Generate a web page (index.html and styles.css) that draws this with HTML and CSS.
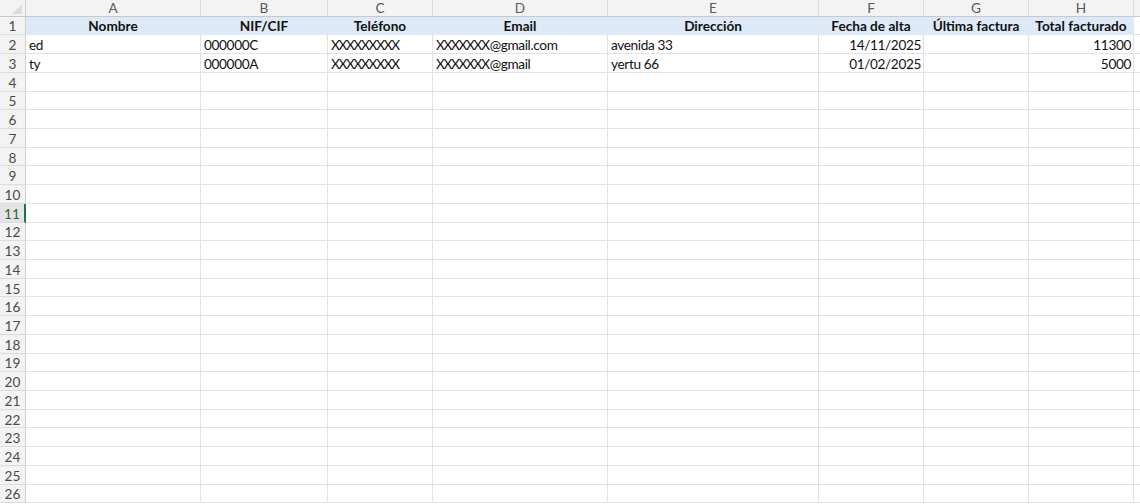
FILE: index.html
```html
<!DOCTYPE html>
<html lang="es">
<head>
<meta charset="utf-8">
<title>Clientes</title>
<link rel="stylesheet" href="styles.css">
</head>
<body>
<div class="sheet">
  <div class="r hdr">
    <i class="n corner"><span class="tri"></span></i><i>A</i><i>B</i><i>C</i><i>D</i><i>E</i><i>F</i><i>G</i><i>H</i><i class="rest"></i>
  </div>
  <div class="r head">
    <i class="n">1</i><i>Nombre</i><i>NIF/CIF</i><i>Teléfono</i><i>Email</i><i>Dirección</i><i>Fecha de alta</i><i>Última factura</i><i>Total facturado</i><i class="rest"></i>
  </div>
  <div class="r data">
    <i class="n">2</i><i>ed</i><i>000000C</i><i><span class="xx">XXXXXXXXX</span></i><i><span class="xx">XXXXXXX</span>@gmail.com</i><i>avenida 33</i><i class="num">14/11/2025</i><i></i><i class="num">11300</i><i class="rest"></i>
  </div>
  <div class="r data">
    <i class="n">3</i><i>ty</i><i>000000A</i><i><span class="xx">XXXXXXXXX</span></i><i><span class="xx">XXXXXXX</span>@gmail</i><i>yertu 66</i><i class="num">01/02/2025</i><i></i><i class="num">5000</i><i class="rest"></i>
  </div>
  <div class="r"><i class="n">4</i><i></i><i></i><i></i><i></i><i></i><i></i><i></i><i></i><i class="rest"></i></div>
  <div class="r"><i class="n">5</i><i></i><i></i><i></i><i></i><i></i><i></i><i></i><i></i><i class="rest"></i></div>
  <div class="r"><i class="n">6</i><i></i><i></i><i></i><i></i><i></i><i></i><i></i><i></i><i class="rest"></i></div>
  <div class="r"><i class="n">7</i><i></i><i></i><i></i><i></i><i></i><i></i><i></i><i></i><i class="rest"></i></div>
  <div class="r"><i class="n">8</i><i></i><i></i><i></i><i></i><i></i><i></i><i></i><i></i><i class="rest"></i></div>
  <div class="r"><i class="n">9</i><i></i><i></i><i></i><i></i><i></i><i></i><i></i><i></i><i class="rest"></i></div>
  <div class="r"><i class="n">10</i><i></i><i></i><i></i><i></i><i></i><i></i><i></i><i></i><i class="rest"></i></div>
  <div class="r sel"><i class="n">11</i><i></i><i></i><i></i><i></i><i></i><i></i><i></i><i></i><i class="rest"></i></div>
  <div class="r"><i class="n">12</i><i></i><i></i><i></i><i></i><i></i><i></i><i></i><i></i><i class="rest"></i></div>
  <div class="r"><i class="n">13</i><i></i><i></i><i></i><i></i><i></i><i></i><i></i><i></i><i class="rest"></i></div>
  <div class="r"><i class="n">14</i><i></i><i></i><i></i><i></i><i></i><i></i><i></i><i></i><i class="rest"></i></div>
  <div class="r"><i class="n">15</i><i></i><i></i><i></i><i></i><i></i><i></i><i></i><i></i><i class="rest"></i></div>
  <div class="r"><i class="n">16</i><i></i><i></i><i></i><i></i><i></i><i></i><i></i><i></i><i class="rest"></i></div>
  <div class="r"><i class="n">17</i><i></i><i></i><i></i><i></i><i></i><i></i><i></i><i></i><i class="rest"></i></div>
  <div class="r"><i class="n">18</i><i></i><i></i><i></i><i></i><i></i><i></i><i></i><i></i><i class="rest"></i></div>
  <div class="r"><i class="n">19</i><i></i><i></i><i></i><i></i><i></i><i></i><i></i><i></i><i class="rest"></i></div>
  <div class="r"><i class="n">20</i><i></i><i></i><i></i><i></i><i></i><i></i><i></i><i></i><i class="rest"></i></div>
  <div class="r"><i class="n">21</i><i></i><i></i><i></i><i></i><i></i><i></i><i></i><i></i><i class="rest"></i></div>
  <div class="r"><i class="n">22</i><i></i><i></i><i></i><i></i><i></i><i></i><i></i><i></i><i class="rest"></i></div>
  <div class="r"><i class="n">23</i><i></i><i></i><i></i><i></i><i></i><i></i><i></i><i></i><i class="rest"></i></div>
  <div class="r"><i class="n">24</i><i></i><i></i><i></i><i></i><i></i><i></i><i></i><i></i><i class="rest"></i></div>
  <div class="r"><i class="n">25</i><i></i><i></i><i></i><i></i><i></i><i></i><i></i><i></i><i class="rest"></i></div>
  <div class="r"><i class="n">26</i><i></i><i></i><i></i><i></i><i></i><i></i><i></i><i></i><i class="rest"></i></div>
</div>
</body>
</html>
```
FILE: styles.css
```css
html, body {
  margin: 0;
  padding: 0;
  background: #ffffff;
}
body {
  font-family: Lato, "Open Sans", "Liberation Sans", sans-serif;
  font-size: 13.6px;
  color: #111;
  overflow: hidden;
}
.sheet {
  display: flex;
  flex-direction: column;
  width: 1140px;
}
.r {
  display: grid;
  grid-template-columns: 26px 175px 127px 105px 175px 211px 105px 105px 105px 1fr;
  height: 18.72px;
}
.r > i {
  font-style: normal;
  box-sizing: border-box;
  border-right: 1px solid #e2e2e2;
  border-bottom: 1px solid #e2e2e2;
  padding: 2px 3px 0;
  display: flex;
  align-items: center;
  white-space: nowrap;
  overflow: hidden;
}
.data > i {
  letter-spacing: -0.35px;
}
.data .xx {
  letter-spacing: -1.3px;
  margin-right: 1px;
}
.r > i.num {
  justify-content: flex-end;
  padding-right: 2px;
}
.r > i.rest {
  border-right: none;
}
.r > i.n {
  background: #f3f3f3;
  color: #4a4a4a;
  justify-content: center;
  padding: 2px 0 0;
  border-right: 1px solid #cfcfcf;
  border-bottom: 1px solid #dcdcdc;
  letter-spacing: 0;
}
.hdr {
  height: 16.64px;
}
.hdr > i {
  background: #f3f3f3;
  color: #5a5a5a;
  justify-content: center;
  padding-top: 1px;
  border-right: 1px solid #dcdcdc;
  border-bottom: 1px solid #c9c9c9;
}
.hdr > i.n {
  border-bottom: 1px solid #c9c9c9;
  position: relative;
}
.tri {
  position: absolute;
  right: 3px;
  bottom: 2px;
  width: 0;
  height: 0;
  border-left: 10px solid transparent;
  border-bottom: 10px solid #dcdcdc;
}
.head > i {
  background: #dde9f6;
  font-weight: 700;
  justify-content: center;
  border-right-color: #dde9f6;
  border-bottom-color: #dde9f6;
}
.head > i.rest {
  background: #ffffff;
  border-bottom-color: #e2e2e2;
}
.head > i.n {
  background: #f3f3f3;
  font-weight: 400;
  border-right-color: #cfcfcf;
  border-bottom-color: #dcdcdc;
}
.sel > i.n {
  background: #e3e3e3;
  color: #1f6b3f;
  border-right: 2px solid #217346;
}
```
